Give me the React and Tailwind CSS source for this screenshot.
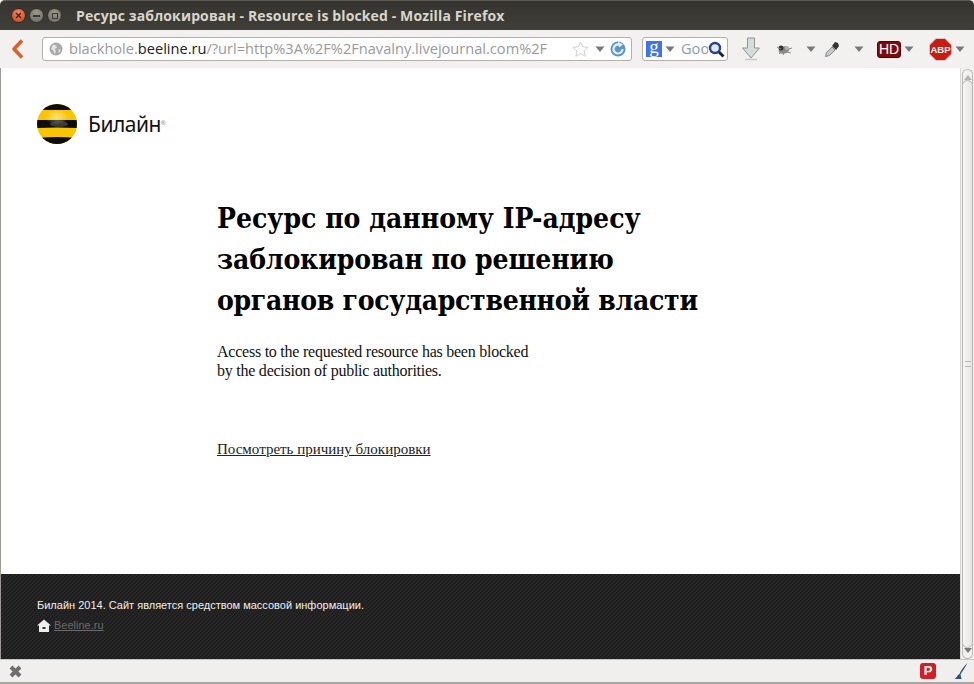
const sans = "font-['Open_Sans',sans-serif]";

function Caret({ className = "" }) {
  return (
    <svg width="10" height="6" viewBox="0 0 10 6" className={className}>
      <path d="M0.5 0.5h9L5 6z" fill="#77787a" />
    </svg>
  );
}

function WindowButtons() {
  return (
    <div className="flex items-center gap-[3px]">
      <div className="w-[15px] h-[15px] rounded-full bg-[radial-gradient(circle_at_50%_30%,#f08a5f,#c8421d)] border border-[#3a2a22] flex items-center justify-center">
        <svg width="7" height="7" viewBox="0 0 7 7"><path d="M1 1l5 5M6 1l-5 5" stroke="#4a1c0c" strokeWidth="1.4" /></svg>
      </div>
      <div className="w-[15px] h-[15px] rounded-full bg-[radial-gradient(circle_at_50%_30%,#9a968c,#6d6a62)] border border-[#33312d] flex items-center justify-center">
        <div className="w-[7px] h-[2px] bg-[#3a3833]" />
      </div>
      <div className="w-[15px] h-[15px] rounded-full bg-[radial-gradient(circle_at_50%_30%,#9a968c,#6d6a62)] border border-[#33312d] flex items-center justify-center">
        <div className="w-[6px] h-[6px] border border-[#3a3833]" />
      </div>
    </div>
  );
}

function TitleBar() {
  return (
    <div className="h-[30px] shrink-0 flex items-center pl-[11px] rounded-t-[5px] border-t border-[#5c5a54] bg-gradient-to-b from-[#35342f] to-[#403e39]">
      <WindowButtons />
      <div className={`ml-[14px] text-[14px] font-bold tracking-[0.13px] text-[#d9d5cb] whitespace-nowrap ${sans}`}>
        Ресурс заблокирован - Resource is blocked - Mozilla Firefox
      </div>
    </div>
  );
}

function UrlBar() {
  return (
    <div className="ml-[17px] w-[590px] h-[24px] rounded-[3px] border border-[#b3b0aa] bg-white flex items-center pl-[6px] pr-[3px]">
      <svg width="14" height="14" viewBox="0 0 14 14" className="shrink-0">
        <circle cx="7" cy="7" r="6.5" fill="#a9a9a9" />
        <path d="M4 2.5l3 1 1 2-2 1.5 1 3-1.5 2-1-3-2.5-2zM9.5 7.5l2-.5-.5 3-1.5 1z" fill="#e4e4e4" />
      </svg>
      <div className={`ml-[6px] text-[14.6px] text-[#9a9a9a] whitespace-nowrap overflow-hidden w-[497px] ${sans}`}>
        blackhole.<span className="text-[#222]">beeline.ru</span>/?url=http%3A%2F%2Fnavalny.livejournal.com%2F
      </div>
      <svg width="17" height="16" viewBox="0 0 17 16" className="ml-[6px] shrink-0">
        <path d="M8.5 1l2.2 4.8 5.3.6-3.9 3.6 1 5.2-4.6-2.6-4.6 2.6 1-5.2L1 6.4l5.3-.6z" fill="#fff" stroke="#cfcfcf" />
      </svg>
      <Caret className="ml-[6px] shrink-0" />
      <svg width="16" height="16" viewBox="0 0 16 16" className="ml-[5px] shrink-0">
        <circle cx="8" cy="8" r="7.5" fill="#5b93cf" />
        <path d="M12.5 8A4.5 4.5 0 1 1 9 3.6" fill="none" stroke="#e8f1fa" strokeWidth="2.2" />
        <path d="M8 0.8l5 2.6-4 3z" fill="#e8f1fa" />
      </svg>
    </div>
  );
}

function SearchBox() {
  return (
    <div className="ml-[10px] w-[86px] h-[24px] rounded-[3px] border border-[#b3b0aa] bg-white flex items-center pl-[3px] overflow-hidden">
      <div className="w-[16px] h-[16px] bg-[#3f73e8] text-white text-[19px] leading-[12px] text-center font-['Liberation_Serif',serif]">g</div>
      <Caret className="ml-[3px]" />
      <div className={`ml-[6px] w-[27px] overflow-hidden text-[14.6px] text-[#8c9bb0] ${sans}`}>Goo</div>
      <svg width="17" height="17" viewBox="0 0 17 17">
        <circle cx="7" cy="7" r="5" fill="#dcebf7" stroke="#2b3f99" strokeWidth="2.4" />
        <path d="M11 11l4.5 4.5" stroke="#1b1f33" strokeWidth="2.8" />
      </svg>
    </div>
  );
}

function ExtensionIcons() {
  return (
    <div className="ml-[13px] flex items-center">
      <svg width="20" height="24" viewBox="0 0 20 24">
        <path d="M6.500 1h7v10H18.500L10 21 1.500 11H6.500z" fill="#d5dcdc" stroke="#8f9593" />
        <path d="M4 22.500h12" stroke="#c9c9c7" strokeWidth="1.500" />
      </svg>
      <svg width="16" height="14" viewBox="0 0 16 14" className="ml-[15px]">
        <ellipse cx="8" cy="8" rx="5.500" ry="3.500" fill="#8a8a8a" transform="rotate(-15 8 8)" />
        <circle cx="5" cy="6" r="2.500" fill="#333" />
        <circle cx="11" cy="6" r="2" fill="#b5b5b5" />
        <path d="M1 5l4 2M3 12l3-3M7 13l1-3M11 10l4 1M13 7l3-1" stroke="#8a8a8a" />
      </svg>
      <Caret className="ml-[14px]" />
      <svg width="17" height="17" viewBox="0 0 17 17" className="ml-[8px]">
        <path d="M1.500 15.500l1-4L8 6l3 3-5.500 5.500z" fill="#c8c8c8" stroke="#8a8a8a" />
        <path d="M8 5l4 4 3-4-1-3-3-1z" fill="#333" />
      </svg>
      <Caret className="ml-[13px]" />
      <div className="ml-[13px] w-[24px] h-[17px] rounded-[3px] bg-[#7d0b0d] border border-[#4e0709] text-white text-[14px] leading-[15px] text-center font-['Liberation_Sans',sans-serif]">HD</div>
      <Caret className="ml-[3px]" />
      <svg width="23" height="23" viewBox="0 0 23 23" className="ml-[15px] shrink-0">
        <path d="M7 0.500h9L22.500 7v9L16 22.500H7L0.500 16V7z" fill="#cc1a10" stroke="#c9c9c9" />
        <text x="11.500" y="15" textAnchor="middle" fontSize="9.500" fontWeight="bold" fill="#fff" fontFamily="Liberation Sans, sans-serif">ABP</text>
      </svg>
      <Caret className="ml-[3px]" />
    </div>
  );
}

function Toolbar() {
  return (
    <div className="h-[38px] shrink-0 flex items-center pl-[11px] bg-[#f2f1ef]">
      <svg width="14" height="20" viewBox="0 0 14 20" className="shrink-0">
        <path d="M11 1.500L3 10l8 8.500" fill="none" stroke="#d9622b" strokeWidth="3.600" strokeLinejoin="round" />
      </svg>
      <UrlBar />
      <SearchBox />
      <ExtensionIcons />
    </div>
  );
}

function Logo() {
  return (
    <div className="flex items-center">
      <svg width="40" height="40" viewBox="0 0 40 40">
        <defs>
          <clipPath id="ball"><circle cx="20" cy="20" r="20" /></clipPath>
          <radialGradient id="shine" cx="0.5" cy="0.5" r="0.5">
            <stop offset="0" stopColor="#fff" stopOpacity="0.5" />
            <stop offset="1" stopColor="#fff" stopOpacity="0" />
          </radialGradient>
        </defs>
        <g clipPath="url(#ball)">
          <rect width="40" height="40" fill="#f9c400" />
          <path d="M0 5.500Q20 6.500 40 5.500V0H0z" fill="#0d0d0d" />
          <path d="M0 16Q20 16 40 16V24Q20 23 0 24z" fill="#0d0d0d" />
          <path d="M0 34Q20 32 40 34V40H0z" fill="#0d0d0d" />
          <ellipse cx="20" cy="13" rx="12" ry="8" fill="url(#shine)" />
          <ellipse cx="22" cy="20" rx="9" ry="3" fill="#666" opacity="0.5" />
        </g>
      </svg>
      <div className="ml-[11px] text-[21px] leading-none text-[#111] font-['Noto_Sans',sans-serif] tracking-[-0.5px]">Билайн</div>
      <div className="self-start mt-[15px] text-[6px] text-[#666] font-['Liberation_Sans',sans-serif]">®</div>
    </div>
  );
}

function Page() {
  return (
    <div className="flex-1 flex flex-col bg-white border-l border-[#9c9a95]">
      <div className="flex-1 pl-[36px] pt-[36px]">
        <Logo />
        <div className="ml-[180px] mt-[54px]">
          <h1 className="text-[28px] leading-[41px] font-bold text-black whitespace-nowrap font-['DejaVu_Serif_Condensed','DejaVu_Serif',serif]">
            Ресурс по данному IP-адресу<br />
            <span className="tracking-[-0.13px]">заблокирован по решению</span><br />
            <span className="tracking-[-0.27px]">органов государственной власти</span>
          </h1>
          <p className="mt-[21px] text-[16px] leading-[19px] tracking-[-0.24px] text-[#111] font-['Liberation_Serif',serif]">
            Access to the requested resource has been blocked<br />
            by the decision of public authorities.
          </p>
          <a href="#" className="inline-block mt-[60px] text-[15px] leading-[19px] text-[#222] underline font-['Liberation_Serif',serif]">
            Посмотреть причину блокировки
          </a>
        </div>
      </div>
      <div className="h-[85px] shrink-0 pl-[36px] pt-[25px] bg-[#232323] bg-[repeating-linear-gradient(135deg,#262626_0px,#262626_1.414px,#1e1e1e_1.414px,#1e1e1e_2.828px)] font-['Liberation_Sans',sans-serif] text-[11px] leading-[13px]">
        <div className="text-[#f0f0f0]">Билайн 2014. Сайт является средством массовой информации.</div>
        <div className="mt-[7px] flex items-center">
          <svg width="14" height="13" viewBox="0 0 14 13">
            <path d="M7 0.500L14 6.500H12V13H2V6.500H0z" fill="#eee" />
            <rect x="5.500" y="8" width="3" height="2" fill="#333" />
          </svg>
          <a href="#" className="ml-[3px] text-[#6b6b6b] underline">Beeline.ru</a>
        </div>
      </div>
    </div>
  );
}

function Scrollbar() {
  return (
    <div className="w-[14px] shrink-0 flex flex-col items-center bg-[#f2f1ef] border-l border-[#d8d6d2] px-px pt-px">
      <div className="h-[16px] w-full rounded-t-full border border-b-0 border-[#bdbbb7] flex items-center justify-center">
        <svg width="8" height="5" viewBox="0 0 8 5"><path d="M4 0l4 5H0z" fill="#b5b3af" /></svg>
      </div>
      <div className="-mt-[5px] flex-1 w-full rounded-full border border-[#b8b6b2] bg-gradient-to-r from-[#f7f6f5] to-[#e6e5e3] flex items-center justify-center">
        <div className="w-[6px] h-[6px] border-y border-[#b8b6b2]" />
      </div>
      <div className="-mt-[5px] h-[16px] w-full rounded-b-full border border-t-0 border-[#bdbbb7] flex items-center justify-center">
        <svg width="8" height="5" viewBox="0 0 8 5"><path d="M0 0h8L4 5z" fill="#77787a" /></svg>
      </div>
    </div>
  );
}

function StatusBar() {
  return (
    <div className="h-[25px] shrink-0 flex items-center pl-[8px] pr-[5px] bg-[#f0efed] border-t border-[#c8c6c2] border-b-2 border-b-[#a8a6a0]">
      <svg width="15" height="15" viewBox="0 0 15 15">
        <path d="M3 3l9 9M12 3l-9 9" stroke="#6e6e6e" strokeWidth="4" />
      </svg>
      <div className="ml-auto w-[16px] h-[16px] rounded-[3px] bg-[#cf1f28] text-white text-[13px] leading-[16px] text-center font-bold font-['Liberation_Sans',sans-serif]">P</div>
      <svg width="16" height="18" viewBox="0 0 16 18" className="ml-[17px]">
        <path d="M14.500 1C11 4 8 8 6.500 12L5 13c-1 1.500-2 3-3.500 4h7l-1-4.500C9.500 9 12.500 5 14.500 1z" fill="#2b5573" />
      </svg>
    </div>
  );
}

export default function App() {
  return (
    <div className="w-[974px] h-[684px] flex flex-col overflow-hidden bg-[#f2f1ef]">
      <TitleBar />
      <Toolbar />
      <div className="flex-1 flex min-h-0">
        <Page />
        <Scrollbar />
      </div>
      <StatusBar />
    </div>
  );
}
